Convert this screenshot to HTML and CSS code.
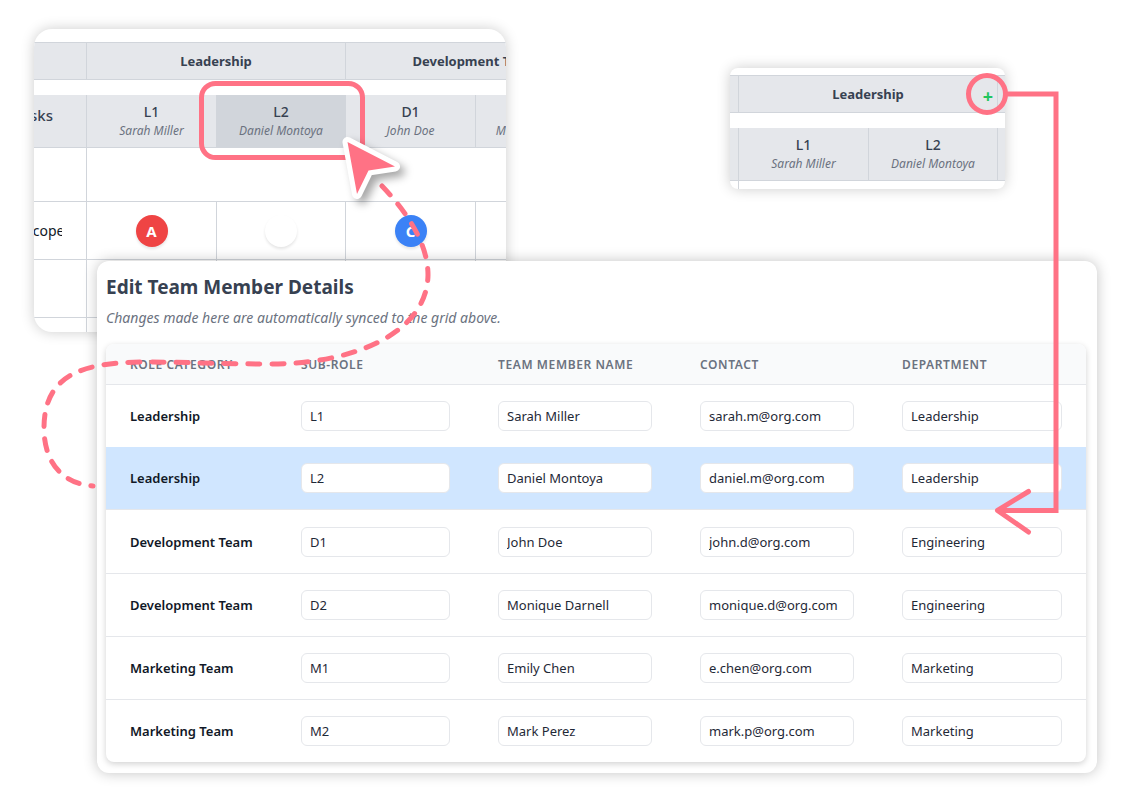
FILE: index.html
```html
<!DOCTYPE html>
<html lang="en">
<head>
  <meta charset="UTF-8">
  <title>Edit Team Member Details</title>
  <link rel="stylesheet" href="styles.css">
</head>
<body>
  <main class="scene">
    <div class="previews">
      <section class="card grid-card">
        <table class="grid">
          <colgroup>
            <col class="col-task"><col class="col-odd"><col class="col-even"><col class="col-odd"><col class="col-even">
          </colgroup>
          <tr class="groups">
            <th></th>
            <th colspan="2">Leadership</th>
            <th colspan="2">Development Team</th>
          </tr>
          <tr class="spacer"><td colspan="5"></td></tr>
          <tr class="roles">
            <th class="tasks">Tasks</th>
            <th>L1<em>Sarah Miller</em></th>
            <th class="selected">L2<em>Daniel Montoya</em></th>
            <th>D1<em>John Doe</em></th>
            <th>D2<em>Monique Darnell</em></th>
          </tr>
          <tr class="phase"><td></td><td colspan="4"></td></tr>
          <tr class="task">
            <td><div class="task-name">scope</div></td>
            <td><span class="badge accountable">A</span></td>
            <td><span class="badge"></span></td>
            <td><span class="badge consulted">C</span></td>
            <td></td>
          </tr>
          <tr class="task"><td></td><td></td><td></td><td></td><td></td></tr>
          <tr class="last"><td></td><td></td><td></td><td></td><td></td></tr>
        </table>
      </section>

      <section class="card add-card">
        <table class="grid">
          <colgroup>
            <col class="col-edge"><col class="col-odd"><col class="col-even"><col>
          </colgroup>
          <tr class="groups">
            <th></th>
            <th colspan="2">Leadership<button class="add" type="button" aria-label="Add role">+</button></th>
            <th></th>
          </tr>
          <tr class="spacer"><td colspan="4"></td></tr>
          <tr class="roles">
            <th></th>
            <th>L1<em>Sarah Miller</em></th>
            <th>L2<em>Daniel Montoya</em></th>
            <th></th>
          </tr>
          <tr class="last"><td></td><td colspan="3"></td></tr>
        </table>
      </section>
    </div>

    <section class="editor">
      <h2>Edit Team Member Details</h2>
      <p class="hint">Changes made here are automatically synced to the grid above.</p>

      <div class="table-wrap">
        <table class="members">
          <colgroup>
            <col class="col-category"><col class="col-sub"><col class="col-name"><col class="col-contact"><col>
          </colgroup>
          <thead>
            <tr>
              <th>Role Category</th>
              <th>Sub-Role</th>
              <th>Team Member Name</th>
              <th>Contact</th>
              <th>Department</th>
            </tr>
          </thead>
          <tbody>
            <tr class="before-active">
              <td>Leadership</td>
              <td><input type="text" aria-label="Sub-role" value="L1"></td>
              <td><input type="text" aria-label="Team member name" value="Sarah Miller"></td>
              <td><input type="text" aria-label="Contact" value="sarah.m@org.com"></td>
              <td><input type="text" aria-label="Department" value="Leadership"></td>
            </tr>
            <tr class="active">
              <td>Leadership</td>
              <td><input type="text" aria-label="Sub-role" value="L2"></td>
              <td><input type="text" aria-label="Team member name" value="Daniel Montoya"></td>
              <td><input type="text" aria-label="Contact" value="daniel.m@org.com"></td>
              <td><input type="text" aria-label="Department" value="Leadership"></td>
            </tr>
            <tr>
              <td>Development Team</td>
              <td><input type="text" aria-label="Sub-role" value="D1"></td>
              <td><input type="text" aria-label="Team member name" value="John Doe"></td>
              <td><input type="text" aria-label="Contact" value="john.d@org.com"></td>
              <td><input type="text" aria-label="Department" value="Engineering"></td>
            </tr>
            <tr>
              <td>Development Team</td>
              <td><input type="text" aria-label="Sub-role" value="D2"></td>
              <td><input type="text" aria-label="Team member name" value="Monique Darnell"></td>
              <td><input type="text" aria-label="Contact" value="monique.d@org.com"></td>
              <td><input type="text" aria-label="Department" value="Engineering"></td>
            </tr>
            <tr>
              <td>Marketing Team</td>
              <td><input type="text" aria-label="Sub-role" value="M1"></td>
              <td><input type="text" aria-label="Team member name" value="Emily Chen"></td>
              <td><input type="text" aria-label="Contact" value="e.chen@org.com"></td>
              <td><input type="text" aria-label="Department" value="Marketing"></td>
            </tr>
            <tr>
              <td>Marketing Team</td>
              <td><input type="text" aria-label="Sub-role" value="M2"></td>
              <td><input type="text" aria-label="Team member name" value="Mark Perez"></td>
              <td><input type="text" aria-label="Contact" value="mark.p@org.com"></td>
              <td><input type="text" aria-label="Department" value="Marketing"></td>
            </tr>
          </tbody>
        </table>
      </div>
    </section>

    <!-- selection box, cursor and dashed link to the L2 row -->
    <svg class="overlay overlay-left" width="520" height="520" viewBox="0 0 520 520" aria-hidden="true">
      <rect class="stroke" x="201.5" y="83.5" width="161" height="74" rx="14"/>
      <path class="stroke dashed" d="M382 186 C402 207 428 240 428 275 C427 334 352 364 270 364 C220 364 190 362 140 362 C84 363 44 374 44 428 C44 464 64 484 93 486"/>
      <path class="cursor" d="M347.500 142 L395 166.500 L368.500 170.500 L357 194 Z"/>
    </svg>

    <!-- circle round the add button and arrow to the new row -->
    <svg class="overlay overlay-right" width="171" height="560" viewBox="960 0 171 560" aria-hidden="true">
      <circle class="stroke" cx="987" cy="94" r="18.5"/>
      <path class="stroke arrow" d="M1007 94 H1056 V510.500 H998"/>
      <path class="stroke" d="M1028.500 491.500 L997.500 510.500 L1028.500 532"/>
    </svg>
  </main>
</body>
</html>
```
FILE: styles.css
```css
* {
  box-sizing: border-box;
}

body {
  margin: 0;
  background-color: #fff;
  color: #374151;
  font-family: "Segoe UI", "Noto Sans", "Open Sans", sans-serif;
  font-size: 13px;
}

.scene {
  position: relative;
  padding: 29px 34px 30px;
}

/* top previews */
.previews {
  display: flex;
  align-items: flex-start;
  justify-content: space-between;
  padding-right: 92px;
}

.card {
  overflow: hidden;
  background-color: #fff;
  box-shadow: 0 0 14px rgba(0, 0, 0, 0.2);
}

.grid-card {
  width: 472px;
  height: 303px;
  padding-top: 13px;
  border-radius: 18px;
}

.add-card {
  width: 275px;
  margin-top: 39px;
  padding-top: 7px;
  border-radius: 8px;
}

.grid {
  table-layout: fixed;
  border-collapse: separate;
  border-spacing: 0;
}

.grid-card .grid {
  width: 618px;
  margin-left: -47px;
}

.add-card .grid {
  width: 276px;
}

.col-task { width: 100px; }
.col-edge { width: 9px; }
.col-odd { width: 130px; }
.col-even { width: 129px; }

.grid th,
.grid td {
  padding: 0;
  border-right: 1px solid #d1d5db;
  border-bottom: 1px solid #d1d5db;
  text-align: center;
}

.grid th {
  background-color: #e5e7eb;
}

.groups th {
  position: relative;
  height: 38px;
  border-top: 1px solid #d1d5db;
  font-size: 13px;
  font-weight: 700;
}

.grid .spacer td {
  height: 15px;
  border: none;
}

.roles th {
  height: 53px;
  font-size: 14px;
  font-weight: 500;
  line-height: 19px;
}

.roles em {
  display: block;
  margin-top: 1px;
  color: #6b7280;
  font-size: 12px;
  font-weight: 400;
  white-space: nowrap;
  line-height: 18px;
}

.grid .tasks {
  padding: 0 33px 12px 0;
  font-size: 15px;
  text-align: right;
}

.grid .selected {
  background-color: #d1d5db;
}

.phase td { height: 54px; }
.task td { height: 58px; }

.grid .last td {
  height: 15px;
  border-bottom: none;
}

.add-card .last td { height: 8px; }

.task-name {
  width: 36px;
  margin-left: 39px;
  overflow: hidden;
  color: #111827;
  font-size: 14px;
  text-align: left;
}

.badge {
  display: inline-block;
  width: 32px;
  height: 32px;
  border-radius: 50%;
  background-color: #fff;
  box-shadow: 0 2px 3px rgba(0, 0, 0, 0.1);
  color: #fff;
  font-size: 15px;
  font-weight: 700;
  line-height: 32px;
  vertical-align: middle;
}

.accountable { background-color: #ef4444; }
.consulted { background-color: #3b82f6; }

.add {
  position: absolute;
  top: 10px;
  right: 4px;
  padding: 0;
  border: none;
  background: none;
  color: #22c55e;
  font: 700 18px/20px "Noto Sans", sans-serif;
  cursor: pointer;
}

/* editor panel */
.editor {
  position: relative;
  margin: -71px 0 0 63px;
  padding: 12px 11px 11px 9px;
  border-radius: 12px;
  background-color: #fff;
  box-shadow: 0 0 14px rgba(0, 0, 0, 0.24);
}

.editor h2 {
  margin: 0;
  font-size: 19px;
  line-height: 28px;
}

.hint {
  margin: 7px 0 16px;
  color: #6b7280;
  font-size: 14px;
  font-style: italic;
  line-height: 20px;
}

.table-wrap {
  overflow: hidden;
  border-radius: 8px;
  box-shadow: 0 2px 6px rgba(0, 0, 0, 0.18);
}

.members {
  width: 100%;
  table-layout: fixed;
  border-collapse: separate;
  border-spacing: 0;
}

.col-category { width: 171px; }
.col-sub { width: 197px; }
.col-name { width: 202px; }
.col-contact { width: 202px; }

.members th {
  height: 41px;
  padding: 0 24px;
  border-bottom: 1px solid #e5e7eb;
  background-color: #f9fafb;
  color: #6b7280;
  font-size: 12px;
  font-weight: 600;
  letter-spacing: 0.05em;
  text-align: left;
  text-transform: uppercase;
  white-space: nowrap;
}

.members td {
  padding: 16px 24px;
  border-bottom: 1px solid #e5e7eb;
  color: #111827;
  font-weight: 600;
  white-space: nowrap;
}

.members .before-active td,
.members tr:last-child td {
  border-bottom: none;
}

.members thead tr th {
  border-bottom: 1px solid #e5e7eb;
}

.members .active td {
  background-color: #d0e6ff;
}

.members .active + tr td {
  border-top: 1px solid #fff;
}

.members input {
  display: block;
  width: 100%;
  height: 30px;
  padding: 0 8px;
  border: 1px solid #e5e7eb;
  border-radius: 6px;
  background-color: #fff;
  color: #1f2937;
  font-family: inherit;
  font-size: 13px;
}

/* annotations */
.overlay {
  position: absolute;
  top: 0;
  pointer-events: none;
}

.overlay-left { left: 0; }
.overlay-right { right: 0; }

.stroke {
  fill: none;
  stroke: #ff7285;
  stroke-width: 5;
  stroke-linecap: round;
  stroke-linejoin: round;
}

.arrow {
  stroke-linecap: butt;
  stroke-linejoin: miter;
}

.dashed {
  stroke-dasharray: 12 12;
}

.cursor {
  fill: #ff7285;
  stroke: #fff;
  stroke-width: 10;
  stroke-linejoin: round;
  paint-order: stroke;
  filter: drop-shadow(5px 5px 4px rgba(0, 0, 0, 0.35));
}
```
